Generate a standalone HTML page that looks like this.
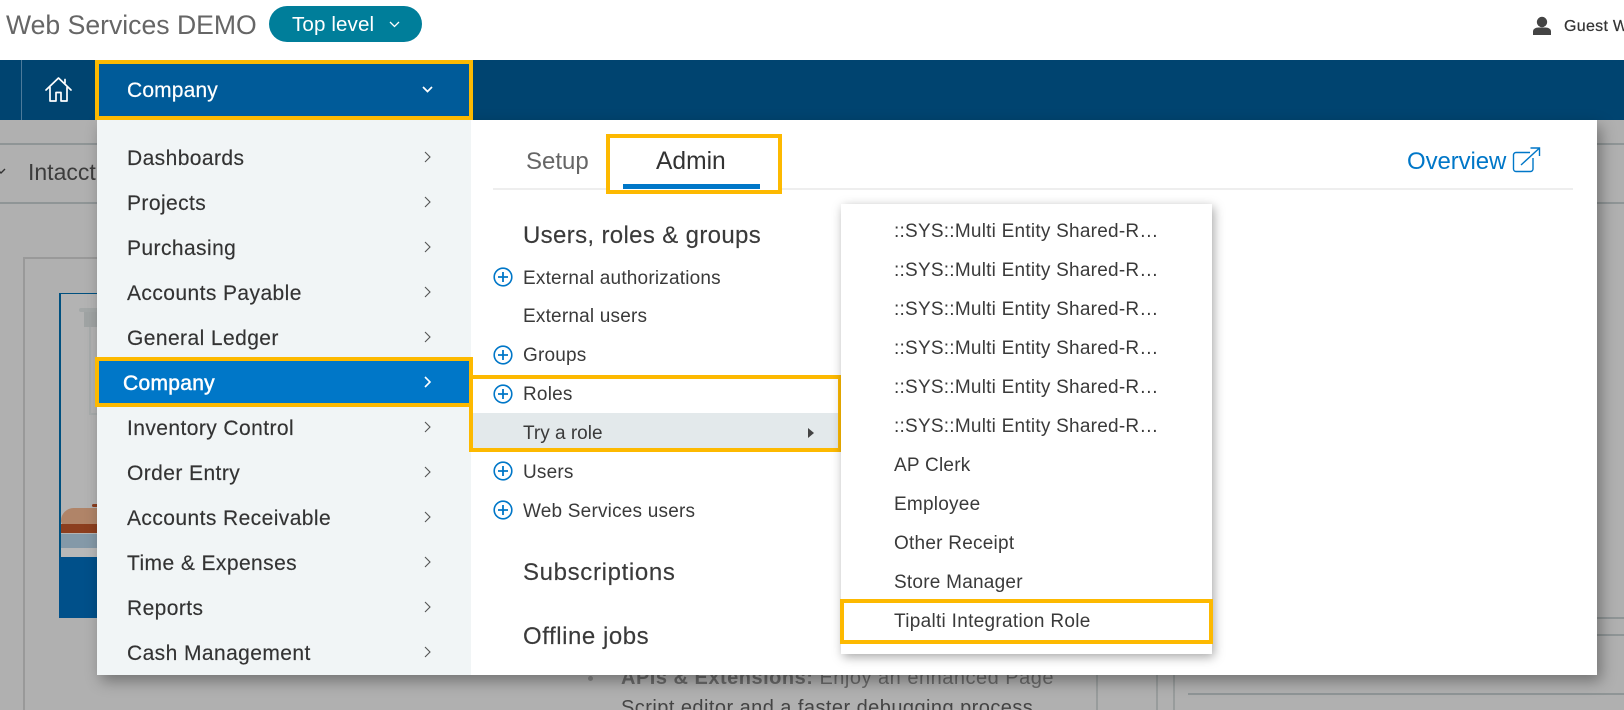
<!DOCTYPE html>
<html><head><meta charset="utf-8"><style>
html,body{margin:0;padding:0;width:1624px;height:710px;overflow:hidden;background:#b0b0b0}
body{position:relative;font-family:"Liberation Sans",Arial,sans-serif;color:#333}
div,svg,span{position:absolute;box-sizing:border-box}
.t{white-space:nowrap;height:30px;line-height:30px}
.m{left:127px;font-size:21px;color:#333;letter-spacing:.42px;-webkit-text-stroke:.15px #333}
.l{left:523px;font-size:19px;color:#3a3a3a;letter-spacing:.2px}
.h{left:523px;font-size:24px;color:#3a3a3a;letter-spacing:.35px;-webkit-text-stroke:.15px #3a3a3a}
.f{left:894px;font-size:19px;color:#3a3a3a;letter-spacing:.24px}
.p{left:493px;width:20px;height:20px}
.y{border:4px solid #fdb900}
.bl{background:#8f9596;height:2px}
</style></head><body>
<!-- dimmed background -->
<div class="bl" style="left:0;top:143px;width:100px"></div>
<div class="bl" style="left:0;top:202px;width:100px"></div>
<div class="bl" style="left:1597px;top:143px;width:27px"></div>
<div class="bl" style="left:1597px;top:202px;width:27px"></div>
<div class="t" style="left:28px;top:157px;font-size:23px;color:#3c3c3c">Intacct</div>
<svg style="left:0;top:168px" width="6" height="8"><path d="M-3 1L1 5L5 1" fill="none" stroke="#333" stroke-width="1.4"/></svg>
<div style="left:23px;top:257px;width:2px;height:453px;background:#999"></div>
<div style="left:23px;top:257px;width:80px;height:2px;background:#999"></div>
<div style="left:59px;top:293px;width:40px;height:325px;background:#b3b3b3;border:solid #00507f;border-width:1px 0 0 2px"></div>
<div style="left:79px;top:308px;width:20px;height:4px;background:#a3a7a7;border-radius:2px"></div>
<div style="left:84px;top:312px;width:15px;height:15px;background:#a0a4a4"></div>
<div style="left:89px;top:327px;width:10px;height:88px;border-left:2px solid #a8acac;border-bottom:2px solid #a8acac"></div>
<div style="left:61px;top:508px;width:40px;height:18px;background:#b08468;border-radius:14px 0 0 6px"></div>
<div style="left:92px;top:504px;width:8px;height:3px;background:#8c3e1e;border-radius:2px"></div>
<div style="left:61px;top:524px;width:40px;height:9px;background:#8c3e1e"></div>
<div style="left:61px;top:534px;width:40px;height:14px;background:#8499a8"></div>
<div style="left:61px;top:548px;width:40px;height:9px;background:#b8b8b8"></div>
<div style="left:59px;top:557px;width:40px;height:61px;background:#00508a"></div>
<div style="left:1096px;top:670px;width:2px;height:40px;background:#989c9c"></div>
<div style="left:1156px;top:670px;width:2px;height:40px;background:#989c9c"></div>
<div style="left:1173px;top:670px;width:2px;height:40px;background:#989c9c"></div>
<div class="bl" style="left:1188px;top:693px;width:436px"></div>
<div class="bl" style="left:1597px;top:617px;width:27px"></div>
<div class="bl" style="left:1597px;top:634px;width:27px"></div>
<div style="left:588px;top:676px;width:5px;height:5px;border-radius:50%;background:#888"></div>
<div class="t" style="left:621px;top:663px;font-size:20px;color:#6a6a6a;letter-spacing:.5px"><b>APIs &amp; Extensions:</b> Enjoy an enhanced Page</div>
<div class="t" style="left:621px;top:693px;font-size:20px;color:#444;letter-spacing:.45px">Script editor and a faster debugging process.</div>

<!-- header -->
<div style="left:0;top:0;width:1624px;height:60px;background:#fff"></div>
<div class="t" style="left:6px;top:10px;font-size:26.600px;color:#666">Web Services DEMO</div>
<div style="left:269px;top:6px;width:153px;height:36px;border-radius:18px;background:#007e9a"></div>
<div class="t" style="left:292px;top:10px;font-size:20.600px;color:#fff;letter-spacing:.1px">Top level</div>
<svg style="left:388px;top:20px" width="13" height="9"><path d="M2 2L6.500 6.500L11 2" fill="none" stroke="#fff" stroke-width="1.300"/></svg>
<svg style="left:1532px;top:16px" width="20" height="20" viewBox="0 0 20 20"><circle cx="10" cy="6" r="5.200" fill="#444"/><path d="M1 19V15.500C1 13 3.500 11.500 6.500 11.500H13.500C16.500 11.500 19 13 19 15.500V19Z" fill="#444"/></svg>
<div class="t" style="left:1564px;top:12px;font-size:16px;color:#333;letter-spacing:.3px;-webkit-text-stroke:.2px #333">Guest W</div>

<!-- nav -->
<div style="left:0;top:60px;width:1624px;height:60px;background:#004470"></div>
<div style="left:21px;top:60px;width:1px;height:60px;background:#4d7a9a"></div>
<svg style="left:44px;top:76px" width="29" height="27" viewBox="0 0 29 27"><path d="M2 14L14.500 2L27 14M21 7V3.500M6 11.500V25H12V16.500H17V25H23V11.500" fill="none" stroke="#fff" stroke-width="1.700" stroke-linejoin="round" stroke-linecap="round"/></svg>

<!-- panel -->
<div style="left:97px;top:120px;width:1500px;height:555px;background:#fff;box-shadow:4px 6px 14px rgba(0,0,0,.35)"></div>
<div style="left:97px;top:120px;width:374px;height:555px;background:#f1f5f6"></div>

<div class="y" style="left:95px;top:60px;width:378px;height:60px;background:#005b99"></div>
<div class="t" style="left:127px;top:76px;font-size:21px;color:#fff;letter-spacing:.15px;-webkit-text-stroke:.2px #fff">Company</div>
<svg style="left:421px;top:85px" width="13" height="10"><path d="M2 2L6.500 6.500L11 2" fill="none" stroke="#fff" stroke-width="1.700"/></svg>

<div class="t m" style="top:143.500px">Dashboards</div>
<div class="t m" style="top:188.500px">Projects</div>
<div class="t m" style="top:233.500px">Purchasing</div>
<div class="t m" style="top:279px">Accounts Payable</div>
<div class="t m" style="top:324px">General Ledger</div>
<div class="y" style="left:95px;top:357px;width:378px;height:50px;background:#0077c8"></div>
<div class="t" style="left:123px;top:368.500px;font-size:21px;color:#fff;letter-spacing:.3px;-webkit-text-stroke:.5px #fff">Company</div>
<div class="t m" style="top:414px">Inventory Control</div>
<div class="t m" style="top:459px">Order Entry</div>
<div class="t m" style="top:504px">Accounts Receivable</div>
<div class="t m" style="top:549px">Time &amp; Expenses</div>
<div class="t m" style="top:594px">Reports</div>
<div class="t m" style="top:639px">Cash Management</div>

<svg style="left:424px;top:151px" width="8" height="60" viewBox="0 0 8 60"><g fill="none" stroke="#555" stroke-width="1.100"><path d="M1 1L6 6L1 11"/><path d="M1 46L6 51L1 56"/></g></svg>
<svg style="left:424px;top:241px" width="8" height="440" viewBox="0 0 8 440"><g fill="none" stroke="#555" stroke-width="1.100"><path d="M1 1L6 6L1 11"/><path d="M1 46L6 51L1 56"/><path d="M1 91L6 96L1 101"/></g><path d="M1 136L6 141L1 146" fill="none" stroke="#fff" stroke-width="1.600"/><g fill="none" stroke="#555" stroke-width="1.100"><path d="M1 181L6 186L1 191"/><path d="M1 226L6 231L1 236"/><path d="M1 271L6 276L1 281"/><path d="M1 316L6 321L1 326"/><path d="M1 361L6 366L1 371"/><path d="M1 406L6 411L1 416"/></g></svg>

<!-- tabs -->
<div style="left:493px;top:188px;width:1080px;height:2px;background:#eeeeee"></div>
<div class="t" style="left:526px;top:147px;font-size:24px;color:#666">Setup</div>
<div class="y" style="left:606px;top:134px;width:176px;height:60px;background:#fff"></div>
<div style="left:623px;top:184px;width:137px;height:5px;background:#0077c8"></div>
<div class="t" style="left:656px;top:147px;font-size:24.600px;color:#333">Admin</div>
<div class="t" style="left:1407px;top:147px;font-size:24px;color:#0077c8;letter-spacing:-.1px">Overview</div>
<svg style="left:1512px;top:147px" width="29" height="26" viewBox="0 0 29 26"><path d="M18 5.500H4A2.500 2.500 0 0 0 1.500 8V22A2.500 2.500 0 0 0 4 24.500H18.500A2.500 2.500 0 0 0 21 22V11M9 18L27 1.500M18.500 1H27.500V9" fill="none" stroke="#0077c8" stroke-width="1.400"/></svg>

<!-- list -->
<div class="t h" style="top:221px">Users, roles &amp; groups</div>
<div class="t l" style="top:263.500px">External authorizations</div>
<div class="t l" style="top:302px">External users</div>
<div class="t l" style="top:341px">Groups</div>
<div style="left:473px;top:413px;width:366px;height:35px;background:#e3e9eb"></div>
<div class="t l" style="top:380px">Roles</div>
<div class="t l" style="top:419px;letter-spacing:0">Try a role</div>
<div class="t l" style="top:458px">Users</div>
<div class="t l" style="top:497px">Web Services users</div>
<svg style="left:807px;top:427px" width="8" height="12"><path d="M1 1L7 6L1 11Z" fill="#444"/></svg>
<div class="y" style="left:469px;top:375px;width:373px;height:77px"></div>
<div class="t h" style="top:558px;letter-spacing:.65px">Subscriptions</div>
<div class="t h" style="top:622px;letter-spacing:.55px">Offline jobs</div>
<svg class="p" style="top:267px" viewBox="0 0 20 20"><circle cx="10" cy="10" r="8.800" fill="none" stroke="#0077c8" stroke-width="1.600"/><path d="M10 5V15M5 10H15" stroke="#0077c8" stroke-width="1.800"/></svg>
<svg class="p" style="top:345px" viewBox="0 0 20 20"><circle cx="10" cy="10" r="8.800" fill="none" stroke="#0077c8" stroke-width="1.600"/><path d="M10 5V15M5 10H15" stroke="#0077c8" stroke-width="1.800"/></svg>
<svg class="p" style="top:384px" viewBox="0 0 20 20"><circle cx="10" cy="10" r="8.800" fill="none" stroke="#0077c8" stroke-width="1.600"/><path d="M10 5V15M5 10H15" stroke="#0077c8" stroke-width="1.800"/></svg>
<svg class="p" style="top:461px" viewBox="0 0 20 20"><circle cx="10" cy="10" r="8.800" fill="none" stroke="#0077c8" stroke-width="1.600"/><path d="M10 5V15M5 10H15" stroke="#0077c8" stroke-width="1.800"/></svg>
<svg class="p" style="top:500px" viewBox="0 0 20 20"><circle cx="10" cy="10" r="8.800" fill="none" stroke="#0077c8" stroke-width="1.600"/><path d="M10 5V15M5 10H15" stroke="#0077c8" stroke-width="1.800"/></svg>

<!-- flyout -->
<div style="left:841px;top:204px;width:371px;height:450px;background:#fff;box-shadow:2px 3px 10px rgba(0,0,0,.35)"></div>
<div class="t f" style="top:217px">::SYS::Multi Entity Shared-R…</div>
<div class="t f" style="top:256px">::SYS::Multi Entity Shared-R…</div>
<div class="t f" style="top:295px">::SYS::Multi Entity Shared-R…</div>
<div class="t f" style="top:334px">::SYS::Multi Entity Shared-R…</div>
<div class="t f" style="top:373px">::SYS::Multi Entity Shared-R…</div>
<div class="t f" style="top:412px">::SYS::Multi Entity Shared-R…</div>
<div class="t f" style="top:451px">AP Clerk</div>
<div class="t f" style="top:490px">Employee</div>
<div class="t f" style="top:529px">Other Receipt</div>
<div class="t f" style="top:568px">Store Manager</div>
<div class="t f" style="top:607px;letter-spacing:.3px">Tipalti Integration Role</div>
<div class="y" style="left:840px;top:599px;width:373px;height:45px"></div>
</body></html>
